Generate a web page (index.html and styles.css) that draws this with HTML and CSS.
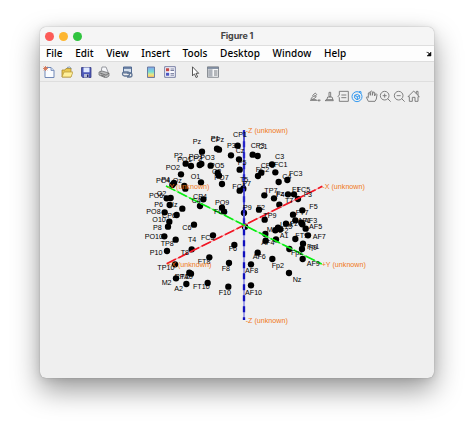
FILE: index.html
```html
<!DOCTYPE html>
<html lang="en">
<head>
<meta charset="utf-8">
<title>Figure 1</title>
<link rel="stylesheet" href="styles.css">
</head>
<body>
<main class="window">
  <header class="titlebar">
    <div class="lights"><i class="close"></i><i class="minimize"></i><i class="expand"></i></div>
    <h1>Figure 1</h1>
  </header>
  <nav class="menubar">
    <span>File</span><span>Edit</span><span>View</span><span>Insert</span><span>Tools</span><span>Desktop</span><span>Window</span><span>Help</span>
    <svg class="dock" viewBox="0 0 6 6"><path d="M.5 1.2Q3 1 4 3.5M5 1v4H1z" fill="#111" stroke="#111" stroke-width=".5"/></svg>
  </nav>
  <div class="toolbar">
    <svg viewBox="0 0 12 12"><path d="M2 1.5h6l3 3v7H2z" fill="#fafcff" stroke="#7188b6"/><path d="M8 1.5v3h3" fill="#cbd9f0" stroke="#7188b6" stroke-width=".8"/><path d="M0 2.5h5M2.5 0v5M.7.7l3.6 3.6M4.3.7L.7 4.3" stroke="#d77756" stroke-width=".9"/></svg>
    <svg viewBox="0 0 12 12"><path d="M1 11V4h3l1-1.5h5V11z" fill="#e9c850" stroke="#a8892e" stroke-width=".8"/><path d="M1 11l2-5h9l-2 5z" fill="#fff09a" stroke="#b6973a" stroke-width=".7"/><path d="M6 1.5q3-1.5 4.5 1" fill="none" stroke="#6a86a5" stroke-width=".8"/></svg>
    <svg viewBox="0 0 12 12"><path d="M1.5 1.5h9.5v10H2.7L1.5 10z" fill="#4b57b8" stroke="#353a82" stroke-width=".8"/><path d="M3.5 1.5h6v4.7h-6z" fill="#dfe9ff"/><path d="M4 8h5v3.5H4z" fill="#b8bed7"/><path d="M7 8.5h1.5V11H7z" fill="#292c66"/></svg>
    <svg viewBox="0 0 12 12"><path d="M3 6l1-5h4l2 5" fill="#f6f7fa" stroke="#80838c" stroke-width=".8"/><path d="M1 6l3-1 7 2v3l-3 2-7-3z" fill="#b9babb" stroke="#707174" stroke-width=".8"/><path d="M2 7l6 2.2L11 7M3 9l4 1.5" fill="none" stroke="#555" stroke-width=".7"/></svg>
    <svg class="link" viewBox="0 0 12 12"><path d="M2.5 1h8v6h-8z" fill="#d5e0ed" stroke="#526b93"/><path d="M2.5 2h8" stroke="#526b93" stroke-width="1.5"/><path d="M3.5 6h3a2 2 0 010 4h-3a2 2 0 010-4zM6 7h3a2 2 0 010 4H6" fill="none" stroke="#617696" stroke-width="1.3"/></svg>
    <svg class="colorbar" viewBox="0 0 12 12"><defs><linearGradient id="spectrum" x2="0" y2="1"><stop stop-color="#89a4ec"/><stop offset=".45" stop-color="#75ded7"/><stop offset=".75" stop-color="#f3e778"/><stop offset="1" stop-color="#eda96c"/></linearGradient></defs><path d="M2.5 1h7v10.5h-7z" fill="url(#spectrum)" stroke="#61739b" stroke-width=".9"/></svg>
    <svg class="legend" viewBox="0 0 12 12"><path d="M.7.7h10.6v10.6H.7z" fill="#fafaff" stroke="#56608d" stroke-width=".8"/><path d="M2 2.2h3.2v3H2z" fill="#c34745"/><path d="M2 6.8h3.2v3H2z" fill="#4e58c1"/><path d="M6.5 3h3.5M6.5 4.5H10M6.5 7.6H10M6.5 9.2H10" stroke="#555d84" stroke-width=".8"/></svg>
    <svg class="pointer" viewBox="0 0 12 12"><path d="M3.5.8v9l2-2 1.5 3.7 1.6-.7-1.6-3.5h2.7z" fill="#fff" stroke="#333" stroke-width=".8"/></svg>
    <svg class="inspector" viewBox="0 0 12 12"><path d="M.5.8h11v10.5H.5z" fill="#f4f5f6" stroke="#71767e" stroke-width=".8"/><path d="M.5 2h11" stroke="#64738b" stroke-width="1.7"/><path d="M1.2 3.2h4.3v7.6H1.2z" fill="#aeb3bb"/><path d="M7 5h3.5M7 7h3.5M7 9h3.5" stroke="#555b64" stroke-width=".8"/></svg>
  </div>
  <svg class="figure" viewBox="120 246 1182 888" aria-label="Electrode positions">
    <g id="points"></g>
    <g fill="none">
      <path d="M732 391V960" stroke="#a2a2e8" stroke-width="6"/>
      <path d="M732 391V960" stroke="#1010bd" stroke-width="7" stroke-dasharray="18 15"/>
      <path d="M732 391V678" stroke="#3030cf" stroke-width="4"/>
      <path d="M500 791L967 559" stroke="#ff8a8f" stroke-width="3"/>
      <path d="M500 791L967 559" stroke="#f01624" stroke-width="5" stroke-dasharray="31 8"/>
      <path d="M498 558L965 792" stroke="#72ff72" stroke-width="3"/>
      <path d="M498 558L965 792" stroke="#08ed12" stroke-width="5" stroke-dasharray="31 8"/>
    </g>
    <g id="labels"></g>
    <g class="axis-labels"><text x="737" y="398">-Z (unknown)</text><text x="737" y="969">-Z (unknown)</text><text x="967" y="567">-X (unknown)</text><text x="965" y="800">+Y (unknown)</text><text x="501" y="567">-Y (unknown)</text><text x="501" y="800">+X (unknown)</text></g>
    <g class="axes-tools">
      <path d="M932 298l6-8 7-3 4 3-7 6-8 3h15M937 287l9-8 4 5-6 6M954 300h7l-4 4zM930 301h23"/>
      <path d="M987 277h5v13h-5zM983 291h13l4 11h-25l6-4zM979 299h20"/>
      <path d="M1018 274h27v30h-27v-11l-4-4 4-4zM1024 285h15M1024 293h15"/>
      <g class="active"><circle cx="1071" cy="290" r="15"/><path d="M1064 286l8-3 7 4v8l-8 4-7-5zM1064 286l8 4 7-3M1072 290v9M1077 275h6v6"/></g>
      <path d="M1105 304l-6-12q2-4 6 1v-14q3-4 5 0l1 7v-11q3-4 6 0v11l2-9q4-3 5 1v10l2-6q4-2 5 2l-2 13-4 7z"/>
      <circle cx="1154" cy="287" r="13"/><path d="M1163 296l9 9M1148 287h12M1154 281v12"/>
      <circle cx="1196" cy="287" r="13"/><path d="M1205 296l9 9M1190 287h12"/>
      <path d="M1224 290l17-17 17 17h-4v14h-9v-12h-8v12h-9v-14zM1249 281v-7h5v12"/>
    </g>
  </svg>
</main>
<script src="plot.js"></script>
</body>
</html>
```
FILE: styles.css
```css
* { box-sizing: border-box; }
html { background: #fff; }
body { margin: 0; height: 430px; padding: 27px 0 0 40px; font-family: "Liberation Sans", Arial, sans-serif; }
.window { width: 394px; height: 351px; border-radius: 6px; overflow: hidden; background: #efefef; box-shadow: 0 0 1px #777, 0 12px 28px #0006, 0 1px 9px #0000001a; display: flex; flex-direction: column; }
.titlebar { height: 19px; flex: none; display: grid; grid-template-columns: 1fr auto 1fr; align-items: center; background: #f5f5f5; border-bottom: 1px solid #dedede; }
.lights { display: flex; gap: 5px; padding-left: 5px; }
.lights i { width: 9px; height: 9px; border-radius: 50%; background: #fc5b57; }
.lights .minimize { background: #fdb630; }
.lights .expand { background: #30c43f; }
h1 { margin: 0; font: 700 9px/18px Inter, sans-serif; color: #444; letter-spacing: -.15px; }
.menubar { height: 16px; flex: none; display: flex; align-items: center; gap: 12.5px; padding: 0 2px 0 6px; background: #fdfdfd; border-bottom: 1px solid #ddd; font: 500 10px/15px "Noto Sans", sans-serif; color: #000; letter-spacing: .05px; }
.dock { width: 6px; height: 6px; margin-left: auto; }
.toolbar { height: 20px; flex: none; display: flex; align-items: center; padding-left: 3px; gap: 6.3px; border-bottom: 1px solid #dedede; background: #eee; }
.toolbar svg { width: 12px; height: 12px; flex: none; }
.toolbar .link { margin-left: 5px; }
.toolbar .colorbar { margin-left: 6px; }
.toolbar .pointer { margin-left: 7px; }
.figure { display: block; width: 394px; height: 296px; flex: none; }
.figure text { font: 21.5px "Liberation Sans", Arial, sans-serif; fill: #000; }
.figure .axis-labels text { fill: #f07818; }
.axes-tools { fill: none; stroke: #777; stroke-width: 2.8; stroke-linejoin: round; }
.active { stroke: #349af0; stroke-width: 3; }
```
FILE: plot.js
```js
const points = [
  [713,437],[651,446],[657,449],[606,455],[693,466],[758,464],[773,468],[717,478],[557,491],[573,498],[599,495],[604,492],[632,497],[816,493],[719,509],[543,523],[653,519],[657,527],[774,528],[784,518],[826,517],[862,540],[836,546],[603,547],[666,552],[517,555],[522,549],[553,558],[556,566],[719,572],[730,566],[793,586],[822,595],[864,583],[882,583],[894,597],[610,598],[600,618],[500,595],[512,594],[509,615],[547,626],[494,637],[530,645],[508,665],[504,680],[666,623],[672,635],[732,639],[777,629],[838,614],[907,631],[879,644],[886,661],[794,659],[904,668],[907,673],[917,686],[858,671],[834,683],[826,691],[841,688],[735,680],[582,674],[639,706],[493,709],[527,719],[501,753],[575,748],[628,772],[703,735],[687,789],[773,758],[753,793],[796,702],[797,722],[828,718],[886,717],[924,706],[909,731],[906,747],[868,747],[908,777],[817,777],[867,819],[525,793],[528,835],[568,818],[573,821],[559,852],[623,849],[685,860],[753,856]
];
const labels = [
  ["Pz",578,433],["CPz",632,426],["P1",632,423],["CP1",699,412],["P3",681,444],["C1",775,447],["CP3",752,443],["C3",825,476],["Cz",707,459],["P2",522,475],["PO1",532,485],["PO1",566,476],["CP2",564,483],["PO3",601,479],["PO5",630,503],["C2",636,522],["PO7",643,540],["PO2",497,509],["O1",572,537],["P4",484,547],["PO4",468,549],["Oz",518,548],["P5",713,494],["T5",720,545],["P7",727,557],["FC4",697,566],["CP5",782,504],["FC2",767,517],["FC1",822,502],["C4",847,537],["FC3",867,528],["TP7",793,579],["Fz",828,589],["F4",829,592],["T7",855,609],["F1",876,576],["FC5",890,576],["F3",911,590],["CP4",579,598],["C4",575,610],["PO6",447,594],["O2",470,589],["P6",463,621],["Iz",516,620],["PO8",439,643],["CP6",486,653],["P8",459,690],["O10",457,666],["C6",547,690],["PO9",645,614],["FC6",642,641],["P9",729,631],["F2",770,629],["F5",928,627],["FT7",887,644],["TP9",790,654],["AF1",893,668],["AF3",912,669],["AF5",927,687],["AF7",938,716],["FT9",886,715],["Fz",870,677],["LPA",840,680],["T3",852,686],["AF2",826,699],["M1",800,697],["A1",839,714],["AF4",784,736],["PO10",434,717],["TP8",482,737],["T4",564,727],["FC5",603,721],["P10",449,765],["T8",542,765],["TP10",472,810],["FT8",593,792],["F6",686,752],["F8",665,814],["AF6",758,776],["AF8",735,819],["Fp2",815,803],["Nz",878,845],["Fp1",921,747],["F9",926,751],["Fpz",873,765],["AF9",920,797],["M2",485,854],["A2",523,872],["RPA",524,837],["T10",541,838],["FT10",579,868],["F10",656,885],["AF10",735,885]
];
const ns = "http://www.w3.org/2000/svg";
for (const [cx, cy] of points) {
  const dot = document.createElementNS(ns, "circle");
  dot.setAttribute("cx", cx);
  dot.setAttribute("cy", cy);
  dot.setAttribute("r", 9.5);
  document.getElementById("points").append(dot);
}
for (const [name, x, y] of labels) {
  const label = document.createElementNS(ns, "text");
  label.setAttribute("x", x);
  label.setAttribute("y", y);
  label.textContent = name;
  document.getElementById("labels").append(label);
}
```
